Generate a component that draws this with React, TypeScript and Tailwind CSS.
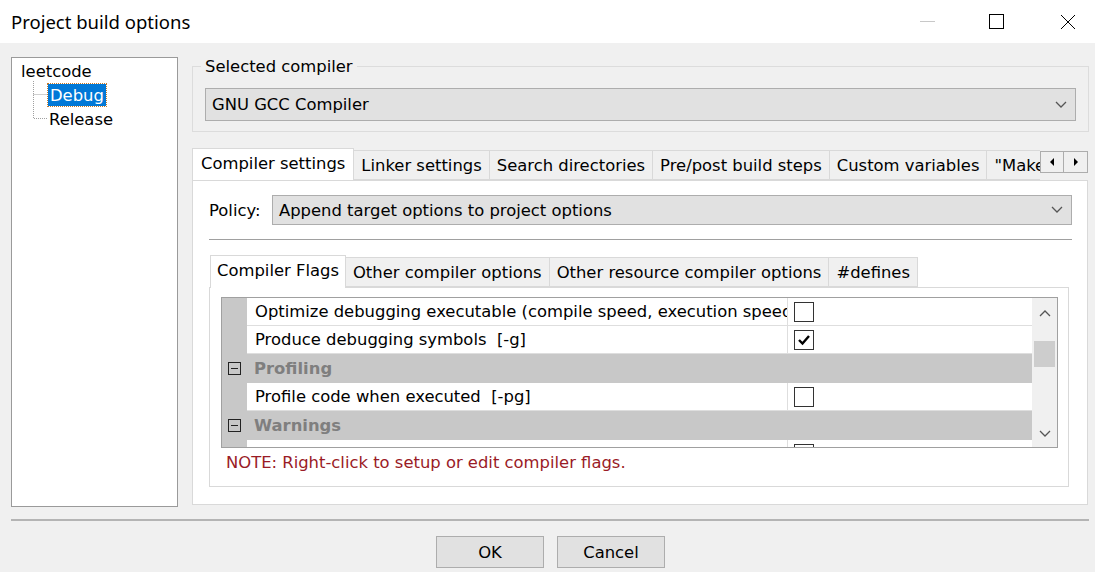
import React from "react";

const outerTabs = [
  "Linker settings",
  "Search directories",
  "Pre/post build steps",
  "Custom variables",
  "\"Make\" commands",
];

const innerTabs = [
  "Other compiler options",
  "Other resource compiler options",
  "#defines",
];

const Chevron: React.FC<{ up?: boolean; className?: string }> = ({ up, className }) => (
  <svg width="12" height="8" viewBox="0 0 12 8" className={className}>
    <path
      d={up ? "M1 7 L6 2 L11 7" : "M1 1 L6 6 L11 1"}
      fill="none"
      stroke="currentColor"
      strokeWidth="1.3"
    />
  </svg>
);

const Checkbox: React.FC<{ checked?: boolean }> = ({ checked }) => (
  <div className="w-[20px] h-[20px] border border-[#333] bg-white flex items-center justify-center shrink-0">
    {checked && (
      <svg width="14" height="12" viewBox="0 0 14 12">
        <path d="M2 6 L5.5 9.5 L12 2" fill="none" stroke="#000" strokeWidth="2.4" />
      </svg>
    )}
  </div>
);

const Collapse: React.FC = () => (
  <div className="w-[13px] h-[13px] border-[1.5px] border-[#222] flex items-center justify-center">
    <div className="w-[7px] h-[1.5px] bg-[#222]" />
  </div>
);

const OptionRow: React.FC<{ label: string; checked?: boolean }> = ({ label, checked }) => (
  <div className="flex h-[28px] shrink-0">
    <div className="w-[25px] bg-[#c8c8c8] shrink-0" />
    <div className="w-[541px] pl-[8px] flex items-center border-b border-r border-[#dedede] overflow-hidden whitespace-pre">
      {label}
    </div>
    <div className="flex-1 pl-[6px] flex items-center border-b border-[#dedede]">
      <Checkbox checked={checked} />
    </div>
  </div>
);

const CategoryRow: React.FC<{ label: string }> = ({ label }) => (
  <div className="flex h-[29px] shrink-0 bg-[#c8c8c8] items-center">
    <div className="w-[25px] flex items-center justify-center">
      <Collapse />
    </div>
    <div className="pl-[7px] font-bold text-[#7f7f7f]">{label}</div>
  </div>
);

const App: React.FC = () => {
  return (
    <div className="w-[1095px] h-[572px] bg-[#f0f0f0] flex flex-col overflow-hidden text-[16.4px] text-black font-['DejaVu_Sans',sans-serif] leading-[19px]">
      {/* title bar */}
      <div className="h-[43px] bg-white flex items-center shrink-0">
        <div className="pl-[11px] flex-1 text-[18.5px] font-['Noto_Sans',sans-serif]">Project build options</div>
        <div className="w-[15px] h-px bg-[#c8c8c8]" />
        <div className="ml-[54px] w-[15px] h-[15px] border border-black" />
        <svg width="16" height="16" viewBox="0 0 16 16" className="ml-[56px] mr-[19px]">
          <path d="M1 1 L15 15 M15 1 L1 15" stroke="#000" strokeWidth="1" />
        </svg>
      </div>

      <div className="flex-1 flex flex-col pl-[11px] pr-[6px]">
        <div className="flex pt-[14px]">
          {/* tree */}
          <div className="w-[167px] h-[450px] shrink-0 bg-white border border-[#9a9a9a] pt-px">
            <div className="h-[24px] pl-[9px] flex items-center">leetcode</div>
            <div className="relative">
              <svg width="20" height="48" className="absolute left-[20px] top-[-2px]">
                <path d="M1.5 0 V37.5 H15 M1.5 13.5 H15" fill="none" stroke="#a0a0a0" strokeDasharray="1 1" />
              </svg>
              <div className="h-[24px] flex items-center pl-[36px]">
                <span className="bg-[#0078d7] text-white px-[2px] h-[22px] flex items-center outline outline-1 outline-dotted outline-[#c47a2c]">
                  Debug
                </span>
              </div>
              <div className="h-[24px] flex items-center pl-[37px]">Release</div>
            </div>
          </div>

          {/* right side */}
          <div className="ml-[14px] w-[897px] shrink-0 flex flex-col">
            <fieldset className="border border-[#dcdcdc] px-[12px] pt-[12px] pb-[10px]">
              <legend className="ml-[-4px] px-[4px] text-[#000]">Selected compiler</legend>
              <div className="h-[33px] bg-[#e1e1e1] border border-[#adadad] flex items-center pl-[6px] pr-[8px]">
                <span className="flex-1">GNU GCC Compiler</span>
                <Chevron className="text-[#555]" />
              </div>
            </fieldset>

            {/* outer tabs */}
            <div className="mt-[15px] flex items-end h-[33px]">
              <div className="flex items-end w-[848px] overflow-hidden">
                <div className="h-[33px] px-[8px] bg-white border border-b-0 border-[#d9d9d9] flex items-center pb-[4px] shrink-0 relative z-10 mb-[-1px]">
                  Compiler settings
                </div>
                {outerTabs.map((t) => (
                  <div
                    key={t}
                    className="h-[30px] px-[7px] border border-l-0 border-[#d9d9d9] flex items-center shrink-0 whitespace-nowrap"
                  >
                    {t}
                  </div>
                ))}
              </div>
              <div className="flex self-start mt-[4px]">
                <div className="w-[24px] h-[22px] border border-[#adadad] bg-[#f0f0f0] flex items-center justify-center">
                  <svg width="6" height="8" viewBox="0 0 6 8"><path d="M5 0 L1 4 L5 8 Z" fill="#000" /></svg>
                </div>
                <div className="w-[24px] h-[22px] border border-l-0 border-[#adadad] bg-[#f0f0f0] flex items-center justify-center">
                  <svg width="6" height="8" viewBox="0 0 6 8"><path d="M1 0 L5 4 L1 8 Z" fill="#000" /></svg>
                </div>
              </div>
            </div>

            <div className="h-[325px] w-[896px] bg-white border border-[#d9d9d9] pl-[16px] pt-[14px]">
              <div className="flex items-center">
                <span className="w-[63px]">Policy:</span>
                <div className="w-[800px] h-[30px] bg-[#e1e1e1] border border-[#adadad] flex items-center pl-[6px] pr-[8px]">
                  <span className="flex-1">Append target options to project options</span>
                  <Chevron className="text-[#555]" />
                </div>
              </div>
              <div className="mt-[14px] w-[863px] border-t border-[#a0a0a0] border-b border-b-white" />

              {/* inner tabs */}
              <div className="mt-[13px] flex items-end h-[33px] pl-[1px]">
                <div className="h-[33px] px-[6px] bg-white border border-b-0 border-[#d9d9d9] flex items-center pb-[4px] relative z-10 mb-[-1px]">
                  Compiler Flags
                </div>
                {innerTabs.map((t) => (
                  <div
                    key={t}
                    className="h-[30px] px-[7px] bg-[#f0f0f0] border border-l-0 border-[#d9d9d9] flex items-center whitespace-nowrap"
                  >
                    {t}
                  </div>
                ))}
              </div>

              <div className="w-[860px] h-[200px] bg-white border border-[#d9d9d9] pl-[11px] pt-[9px]">
                <div className="w-[837px] h-[151px] border border-[#a0a0a0] flex overflow-hidden">
                  <div className="flex-1 flex flex-col overflow-hidden">
                    <OptionRow label="Optimize debugging executable (compile speed, execution speed, and debuggability)  [-Og]" />
                    <OptionRow label="Produce debugging symbols  [-g]" checked />
                    <CategoryRow label="Profiling" />
                    <OptionRow label="Profile code when executed  [-pg]" />
                    <CategoryRow label="Warnings" />
                    <OptionRow label="" />
                  </div>
                  <div className="w-[25px] bg-[#f0f0f0] flex flex-col items-center">
                    <Chevron up className="mt-[11px] text-[#555]" />
                    <div className="mt-[24px] w-[21px] h-[26px] bg-[#cdcdcd]" />
                    <Chevron className="mt-[63px] text-[#555]" />
                  </div>
                </div>
                <div className="mt-[5px] pl-[5px] text-[#9a1b26]">NOTE: Right-click to setup or edit compiler flags.</div>
              </div>
            </div>
          </div>
        </div>

        <div className="mt-[12px] border-t-2 border-[#b4b4b4]" />
        <div className="mt-[15px] flex pl-[425px] gap-[13px]">
          <div className="w-[108px] h-[32px] bg-[#e1e1e1] border border-[#adadad] flex items-center justify-center">OK</div>
          <div className="w-[108px] h-[32px] bg-[#e1e1e1] border border-[#adadad] flex items-center justify-center">Cancel</div>
        </div>
      </div>
    </div>
  );
};

export default App;
